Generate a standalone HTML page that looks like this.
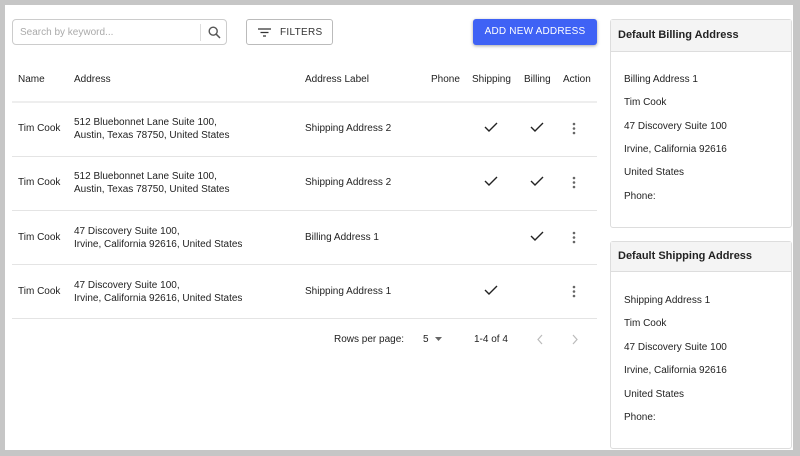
<!DOCTYPE html>
<html><head><style>
*{margin:0;padding:0;box-sizing:border-box}
body{width:800px;height:456px;background:#c6c6c6;font-family:"Liberation Sans",sans-serif;font-size:10px;color:#222;position:relative;overflow:hidden}
.main{position:absolute;left:5px;top:5px;width:788px;height:445px;background:#fff}
.a{position:absolute;white-space:nowrap}
.search{left:12px;top:19px;width:215px;height:26px;border:1px solid #ccc;border-radius:4px}
.filt{left:246px;top:19px;width:87px;height:26px;border:1px solid #bbb;border-radius:3px;font-size:10px;letter-spacing:.3px;color:#333}
.add{left:473px;top:19px;width:124px;height:26px;background:#3f62f5;border-radius:3px;color:#fff;font-size:10px;text-align:center;line-height:26px;box-shadow:0 1px 3px rgba(0,0,0,.35);letter-spacing:.2px}
.hl{position:absolute;left:12px;width:585px;height:1px;background:#e4e4e4}
.card{position:absolute;left:610px;width:182px;border:1px solid #ddd;border-radius:3px;background:#fff}
.card .h{background:#f4f4f4;border-bottom:1px solid #ddd;font-weight:bold;font-size:11px;padding-left:7px}
.card div.i{position:absolute;left:13px;font-size:10px}
</style></head><body>
<div class="main"></div>
<div class="a search"><span class="a" style="left:7px;top:7px;color:#aaa">Search by keyword...</span>
<div class="a" style="left:187px;top:4px;width:1px;height:17px;background:#ddd"></div>
<svg class="a" style="left:195px;top:6px" width="13" height="13" viewBox="0 0 13 13"><circle cx="5.2" cy="5.2" r="4" fill="none" stroke="#555" stroke-width="1.4"/><path d="M8.2 8.2L12 12" stroke="#555" stroke-width="1.5"/></svg></div>
<div class="a filt"><svg class="a" style="left:11px;top:8px" width="13" height="9"><path d="M0 1h13M2.5 4.5h8M5 8h3" stroke="#333" stroke-width="1.3"/></svg><span class="a" style="left:33px;top:7px">FILTERS</span></div>
<div class="a add">ADD NEW ADDRESS</div>
<div class="a" style="left:18px;top:74px">Name</div>
<div class="a" style="left:74px;top:74px">Address</div>
<div class="a" style="left:305px;top:74px">Address Label</div>
<div class="a" style="left:431px;top:74px">Phone</div>
<div class="a" style="left:472px;top:74px">Shipping</div>
<div class="a" style="left:524px;top:74px">Billing</div>
<div class="a" style="left:563px;top:74px">Action</div>
<div class="hl" style="top:101px;height:2px;background:#eee"></div>
<div class="hl" style="top:156px"></div><div class="hl" style="top:210px"></div><div class="hl" style="top:264px"></div><div class="hl" style="top:318px"></div>

<div class="a" style="left:18px;top:123px">Tim Cook</div>
<div class="a" style="left:74px;top:116px;line-height:13px">512 Bluebonnet Lane Suite 100,<br>Austin, Texas 78750, United States</div>
<div class="a" style="left:305px;top:123px">Shipping Address 2</div>
<div class="a" style="left:18px;top:177px">Tim Cook</div>
<div class="a" style="left:74px;top:170px;line-height:13px">512 Bluebonnet Lane Suite 100,<br>Austin, Texas 78750, United States</div>
<div class="a" style="left:305px;top:177px">Shipping Address 2</div>
<div class="a" style="left:18px;top:232px">Tim Cook</div>
<div class="a" style="left:74px;top:225px;line-height:13px">47 Discovery Suite 100,<br>Irvine, California 92616, United States</div>
<div class="a" style="left:305px;top:232px">Billing Address 1</div>
<div class="a" style="left:18px;top:286px">Tim Cook</div>
<div class="a" style="left:74px;top:279px;line-height:13px">47 Discovery Suite 100,<br>Irvine, California 92616, United States</div>
<div class="a" style="left:305px;top:286px">Shipping Address 1</div>

<svg class="a" style="left:0;top:0" width="600" height="320">
<g fill="none" stroke="#222" stroke-width="1.4">
<path d="M485 127l4 4 8-8M531 127l4 4 8-8"/>
<path d="M485 181l4 4 8-8M531 181l4 4 8-8"/>
<path d="M531 236l4 4 8-8"/>
<path d="M485 290l4 4 8-8"/></g>
<g fill="#666"><circle cx="574" cy="124" r="1.3"/><circle cx="574" cy="128.5" r="1.3"/><circle cx="574" cy="133" r="1.3"/>
<circle cx="574" cy="178" r="1.3"/><circle cx="574" cy="182.5" r="1.3"/><circle cx="574" cy="187" r="1.3"/>
<circle cx="574" cy="233" r="1.3"/><circle cx="574" cy="237.5" r="1.3"/><circle cx="574" cy="242" r="1.3"/>
<circle cx="574" cy="287" r="1.3"/><circle cx="574" cy="291.5" r="1.3"/><circle cx="574" cy="296" r="1.3"/></g>
</svg>
<div class="a" style="left:334px;top:334px">Rows per page:</div>
<div class="a" style="left:423px;top:334px">5</div>
<svg class="a" style="left:435px;top:337px" width="8" height="5"><path d="M0 0h7L3.5 4z" fill="#666"/></svg>
<div class="a" style="left:474px;top:334px">1-4 of 4</div>
<svg class="a" style="left:537px;top:334px" width="50" height="11"><path d="M5 1L1 5.5 5 10M36 1l4 4.5-4 4.5" fill="none" stroke="#bbb" stroke-width="1.2"/></svg>

<div class="card" style="top:19px;height:209px"><div class="h" style="height:32px;line-height:30px">Default Billing Address</div>
<div class="i" style="top:54px">Billing Address 1</div><div class="i" style="top:77px">Tim Cook</div><div class="i" style="top:101px">47 Discovery Suite 100</div><div class="i" style="top:124px">Irvine, California 92616</div><div class="i" style="top:147px">United States</div><div class="i" style="top:171px">Phone:</div></div>
<div class="card" style="top:241px;height:208px"><div class="h" style="height:30px;line-height:28px">Default Shipping Address</div>
<div class="i" style="top:53px">Shipping Address 1</div><div class="i" style="top:76px">Tim Cook</div><div class="i" style="top:100px">47 Discovery Suite 100</div><div class="i" style="top:123px">Irvine, California 92616</div><div class="i" style="top:147px">United States</div><div class="i" style="top:170px">Phone:</div></div>
</body></html>
